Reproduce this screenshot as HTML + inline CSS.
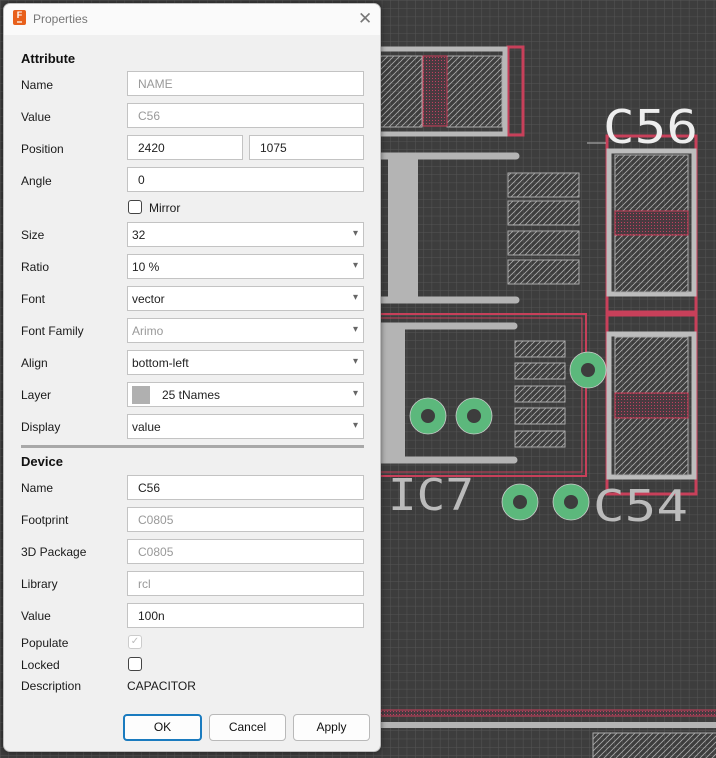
<!DOCTYPE html>
<html><head><meta charset="utf-8">
<style>
*{box-sizing:border-box;margin:0;padding:0}
body{width:716px;height:758px;overflow:hidden;position:relative;background:#3d3d3d;font-family:"Liberation Sans",sans-serif;}
.bg{position:absolute;left:0;top:0}
.dlg{position:absolute;left:3px;top:3px;width:378px;height:749px;background:#f0f0f0;border:1px solid #bdbdbd;border-radius:7px;overflow:hidden;box-shadow:0 0 6px rgba(0,0,0,.5)}
.title{position:absolute;left:0;top:0;width:100%;height:31px;background:#fafafa}
.title .t{position:absolute;left:29px;top:8px;font-size:12px;color:#777}
.title .x{position:absolute;left:354px;top:5px;font-size:17px;color:#777}
.icon{position:absolute;left:9px;top:6px;width:13px;height:15px;background:#e8601c;border-radius:2px;color:#fff;font-size:9px;font-weight:bold;text-align:center;line-height:11px}
.icon:after{content:"";position:absolute;left:4px;bottom:2px;width:5px;height:2px;background:#f7c4a6}
.lbl{position:absolute;left:17px;font-size:12px;color:#1a1a1a}
.h{position:absolute;left:17px;font-size:13px;font-weight:bold;color:#111}
.f{position:absolute;left:123px;width:237px;height:25px;background:#fff;border:1px solid #c3c3c3;font-size:12px;color:#222;padding:5px 0 0 10px}
.f.g{color:#999}
.f.s{padding-left:4px}
.f.s:after{content:"▾";position:absolute;right:5px;top:5px;font-size:10px;color:#666}
.cb{position:absolute;left:124px;width:14px;height:14px;border:1px solid #444;border-radius:3px;background:#fff}
.btn{position:absolute;top:710px;height:27px;border:1px solid #b9b9b9;border-radius:4px;background:#fdfdfd;font-size:12px;text-align:center;line-height:25px;color:#111}
</style></head><body>
<svg class="bg" width="716" height="758" xmlns="http://www.w3.org/2000/svg">
<defs>
<pattern id="grid" width="8.3" height="8.3" patternUnits="userSpaceOnUse"><rect width="8.3" height="8.3" fill="#3d3d3d"/><path d="M0 0H8.3M0 0V8.3" stroke="#555" stroke-width="1"/></pattern>
<pattern id="hat" width="6" height="6" patternUnits="userSpaceOnUse"><path d="M0 6L6 0M-1 1L1 -1M5 7L7 5" stroke="#aaa" stroke-width="0.8"/></pattern>
<pattern id="rdot" width="3" height="3" patternUnits="userSpaceOnUse"><rect width="3" height="3" fill="#4a3a40"/><rect width="1" height="1" fill="#c04060"/></pattern>
</defs>
<rect width="716" height="758" fill="url(#grid)"/>
<rect x="508" y="47" width="15" height="88" fill="none" stroke="#c8405a" stroke-width="3"/>
<rect x="370" y="49" width="135" height="85" fill="none" stroke="#b8b8b8" stroke-width="5"/>
<rect x="380" y="56" width="42" height="71" fill="url(#hat)" stroke="#aaa"/>
<rect x="447" y="56" width="55" height="71" fill="url(#hat)" stroke="#aaa"/>
<rect x="423" y="56" width="24" height="70" fill="url(#rdot)" stroke="#c8405a"/>
<path d="M375 156H516M375 300H516" stroke="#b4b4b4" stroke-width="7" stroke-linecap="round"/>
<rect x="388" y="153" width="30" height="147" fill="#b4b4b4"/>
<g fill="url(#hat)" stroke="#aaa"><rect x="508" y="173" width="71" height="24"/><rect x="508" y="201" width="71" height="24"/><rect x="508" y="231" width="71" height="24"/><rect x="508" y="260" width="71" height="24"/></g>
<rect x="607" y="136" width="89" height="176" fill="none" stroke="#c8405a" stroke-width="3"/>
<rect x="609" y="151" width="85" height="143" fill="none" stroke="#bdbdbd" stroke-width="5"/>
<rect x="615" y="155" width="73" height="56" fill="url(#hat)" stroke="#aaa"/>
<rect x="615" y="235" width="73" height="57" fill="url(#hat)" stroke="#aaa"/>
<rect x="615" y="211" width="73" height="24" fill="url(#rdot)" stroke="#c8405a"/>
<line x1="587" y1="143" x2="606" y2="143" stroke="#bbb"/>
<text x="603" y="143" font-family="DejaVu Sans Mono,monospace" font-size="46" fill="#eee" textLength="95" lengthAdjust="spacingAndGlyphs">C56</text>
<rect x="607" y="315" width="89" height="179" fill="none" stroke="#c8405a" stroke-width="3"/>
<rect x="609" y="334" width="85" height="143" fill="none" stroke="#bdbdbd" stroke-width="5"/>
<rect x="615" y="337" width="73" height="56" fill="url(#hat)" stroke="#aaa"/>
<rect x="615" y="418" width="73" height="57" fill="url(#hat)" stroke="#aaa"/>
<rect x="615" y="393" width="73" height="25" fill="url(#rdot)" stroke="#c8405a"/>
<rect x="372" y="314" width="214" height="162" fill="none" stroke="#c8405a" stroke-width="2"/>
<rect x="376" y="318" width="206" height="154" fill="none" stroke="#c8405a" stroke-width="1"/>
<path d="M375 326H514M375 460H514" stroke="#b4b4b4" stroke-width="7" stroke-linecap="round"/>
<rect x="375" y="323" width="30" height="140" fill="#b4b4b4"/>
<g fill="url(#hat)" stroke="#aaa"><rect x="515" y="341" width="50" height="16"/><rect x="515" y="363" width="50" height="16"/><rect x="515" y="386" width="50" height="16"/><rect x="515" y="408" width="50" height="16"/><rect x="515" y="431" width="50" height="16"/></g>
<g fill="#5cb87c" stroke="#ccc" stroke-width="0.8"><circle cx="428" cy="416" r="18"/><circle cx="474" cy="416" r="18"/><circle cx="520" cy="502" r="18"/><circle cx="571" cy="502" r="18"/><circle cx="588" cy="370" r="18"/></g>
<g fill="#3d3d3d"><circle cx="428" cy="416" r="7"/><circle cx="474" cy="416" r="7"/><circle cx="520" cy="502" r="7"/><circle cx="571" cy="502" r="7"/><circle cx="588" cy="370" r="7"/></g>
<text x="388" y="510" font-family="DejaVu Sans Mono,monospace" font-size="44" fill="#bbb" textLength="86" lengthAdjust="spacingAndGlyphs">IC7</text>
<text x="593" y="521" font-family="DejaVu Sans Mono,monospace" font-size="44" fill="#bbb" textLength="95" lengthAdjust="spacingAndGlyphs">C54</text>
<rect x="370" y="710" width="350" height="6" fill="url(#rdot)" stroke="#c8405a"/>
<rect x="370" y="722" width="350" height="6" fill="#b4b4b4"/>
<rect x="593" y="733" width="130" height="30" fill="url(#hat)" stroke="#aaa"/>
</svg>

<div class="dlg">
 <div class="title"><div class="icon">F</div><div class="t">Properties</div><div class="x">✕</div></div>
 <div class="h" style="top:47px">Attribute</div>
 <div class="lbl" style="top:74px">Name</div><div class="f g" style="top:67px">NAME</div>
 <div class="lbl" style="top:106px">Value</div><div class="f g" style="top:99px">C56</div>
 <div class="lbl" style="top:138px">Position</div><div class="f" style="top:131px;width:116px">2420</div><div class="f" style="top:131px;left:245px;width:115px">1075</div>
 <div class="lbl" style="top:170px">Angle</div><div class="f" style="top:163px">0</div>
 <div class="cb" style="top:196px"></div><div class="lbl" style="top:197px;left:145px">Mirror</div>
 <div class="lbl" style="top:224px">Size</div><div class="f s" style="top:218px">32</div>
 <div class="lbl" style="top:256px">Ratio</div><div class="f s" style="top:250px">10 %</div>
 <div class="lbl" style="top:288px">Font</div><div class="f s" style="top:282px">vector</div>
 <div class="lbl" style="top:320px">Font Family</div><div class="f s g" style="top:314px">Arimo</div>
 <div class="lbl" style="top:352px">Align</div><div class="f s" style="top:346px">bottom-left</div>
 <div class="lbl" style="top:384px">Layer</div><div class="f s" style="top:378px;padding-left:34px"><span style="position:absolute;left:4px;top:3px;width:18px;height:18px;background:#b0b0b0"></span>25 tNames</div>
 <div class="lbl" style="top:416px">Display</div><div class="f s" style="top:410px">value</div>
 <div style="position:absolute;left:17px;top:441px;width:343px;height:3px;background:#a8a8a8"></div>
 <div class="h" style="top:450px">Device</div>
 <div class="lbl" style="top:477px">Name</div><div class="f" style="top:471px">C56</div>
 <div class="lbl" style="top:509px">Footprint</div><div class="f g" style="top:503px">C0805</div>
 <div class="lbl" style="top:541px">3D Package</div><div class="f g" style="top:535px">C0805</div>
 <div class="lbl" style="top:573px">Library</div><div class="f g" style="top:567px">rcl</div>
 <div class="lbl" style="top:605px">Value</div><div class="f" style="top:599px">100n</div>
 <div class="lbl" style="top:632px">Populate</div><div class="cb" style="top:631px;border-color:#ccc;color:#bbb;font-size:10px;line-height:12px;text-align:center">✓</div>
 <div class="lbl" style="top:654px">Locked</div><div class="cb" style="top:653px"></div>
 <div class="lbl" style="top:675px">Description</div><div class="lbl" style="top:675px;left:123px">CAPACITOR</div>
 <div class="btn" style="left:119px;width:79px;border:2px solid #1a7bbf;line-height:23px">OK</div>
 <div class="btn" style="left:205px;width:77px">Cancel</div>
 <div class="btn" style="left:289px;width:77px">Apply</div>
</div>
</body></html>
